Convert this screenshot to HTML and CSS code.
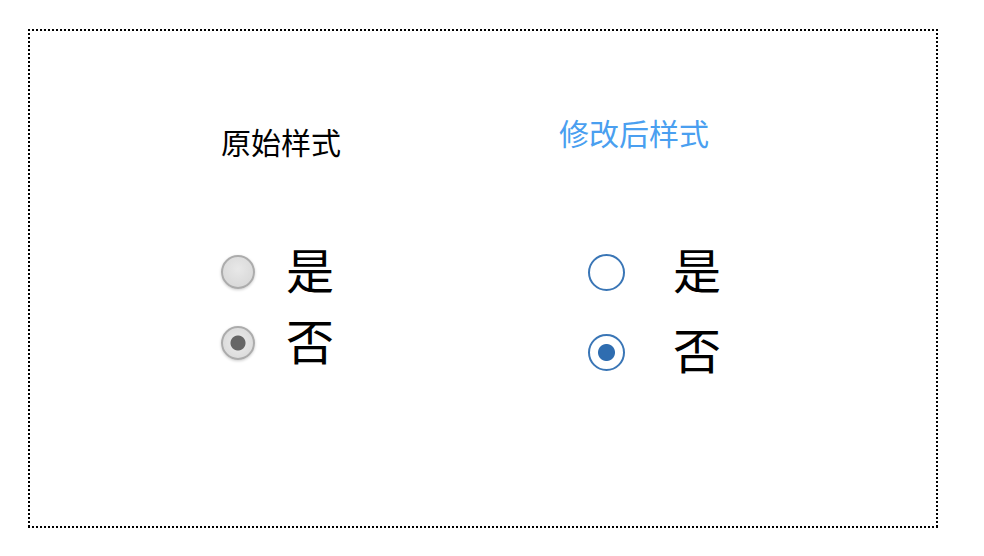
FILE: index.html
```html
<!DOCTYPE html>
<html lang="zh-CN">
<head>
    <meta charset="UTF-8">
    <meta name="viewport" content="width=device-width, initial-scale=1.0">
    <title>单选框样式对比</title>
    <link rel="stylesheet" href="styles.css">
</head>
<body>
    <!-- Demo frame -->
    <div class="frame">
        <!-- Native look -->
        <div class="col col-left">
            <p class="title">原始样式</p>
            <label class="row">
                <input type="radio" name="orig" class="radio-orig">
                <span class="label-text">是</span>
            </label>
            <label class="row">
                <input type="radio" name="orig" class="radio-orig" checked>
                <span class="label-text">否</span>
            </label>
        </div>

        <!-- Custom look -->
        <div class="col col-right">
            <p class="title title-blue">修改后样式</p>
            <label class="row">
                <input type="radio" name="custom" class="radio-custom">
                <span class="label-text">是</span>
            </label>
            <label class="row">
                <input type="radio" name="custom" class="radio-custom" checked>
                <span class="label-text">否</span>
            </label>
        </div>
    </div>
</body>
</html>
```

FILE: styles.css
```css
* {
    margin: 0;
    padding: 0;
    box-sizing: border-box;
}

body, html {
    width: 100%;
    height: 100%;
    overflow: hidden;
    background: #fff;
    font-family: "Noto Sans CJK SC", "Noto Sans", sans-serif;
}

/* Dotted demo frame: square 2px dots drawn with gradients */
.frame {
    margin: 29px 0 0 28px;
    width: 910px;
    height: 499px;
    padding: 2px 2px 2px 193px;
    display: flex;
    background:
        repeating-linear-gradient(90deg, #000 0 2px, transparent 2px 4px) top / 100% 2px no-repeat,
        repeating-linear-gradient(90deg, #000 0 2px, transparent 2px 4px) bottom / 100% 2px no-repeat,
        repeating-linear-gradient(180deg, #000 0 2px, transparent 2px 4px) left / 2px 100% no-repeat,
        repeating-linear-gradient(180deg, #000 0 2px, transparent 2px 4px) right / 2px 100% no-repeat;
}

.col {
    display: flex;
    flex-direction: column;
}

.col-left {
    width: 338px;
    padding-top: 95px;
}

.col-right {
    padding-top: 86px;
}

.title {
    font-size: 30px;
    line-height: 30px;
    color: #000;
}

.title-blue {
    color: #4a9ff0;
}

.row {
    display: flex;
    align-items: center;
    height: 48px;
    cursor: pointer;
}

.label-text {
    font-size: 48px;
    line-height: 48px;
    padding-bottom: 8px;
    color: #000;
}

/* Native-ish radio, scaled up */
.col-left .row:nth-of-type(1) {
    margin-top: 92px;
}

.col-left .row + .row {
    margin-top: 23px;
}

.radio-orig {
    appearance: none;
    width: 34px;
    height: 34px;
    border-radius: 50%;
    border: 2.5px solid #acacac;
    background: radial-gradient(circle at 50% 40%, #e8e8e8, #d4d4d4);
    box-shadow: 0 1px 3px rgba(0, 0, 0, 0.2);
    margin-right: 31px;
    flex-shrink: 0;
}

.radio-orig:checked {
    background: radial-gradient(circle, #666 0 7px, #e4e4e4 8px, #d6d6d6 100%);
}

/* Custom radio */
.col-right .row:nth-of-type(1) {
    margin-top: 101px;
}

.col-right .row + .row {
    margin-top: 32px;
}

.radio-custom {
    appearance: none;
    width: 37px;
    height: 37px;
    border-radius: 50%;
    border: 2.5px solid #3a76b6;
    background: #fff;
    margin-right: 48px;
    margin-left: 29px;
    flex-shrink: 0;
}

.radio-custom:checked {
    background: radial-gradient(circle, #2f6db0 0 8px, #fff 9px);
}
```
